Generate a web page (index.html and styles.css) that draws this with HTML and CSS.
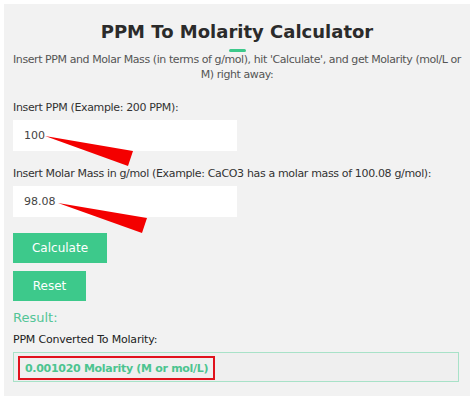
FILE: index.html
```html
<!DOCTYPE html>
<html lang="en">
<head>
    <meta charset="UTF-8">
    <meta name="viewport" content="width=device-width, initial-scale=1.0">
    <title>PPM To Molarity Calculator</title>
    <link rel="stylesheet" href="styles.css">
</head>
<body>
    <div class="panel">
        <h1>PPM To Molarity Calculator</h1>
        <div class="bar"></div>
        <p class="intro">Insert PPM and Molar Mass (in terms of g/mol), hit 'Calculate', and get Molarity (mol/L or M) right away:</p>

        <label class="field-label" for="ppm">Insert PPM (Example: 200 PPM):</label>
        <input type="text" id="ppm" class="field" value="100">

        <label class="field-label" for="mass">Insert Molar Mass in g/mol (Example: CaCO3 has a molar mass of 100.08 g/mol):</label>
        <input type="text" id="mass" class="field" value="98.08">

        <div class="actions">
            <button class="btn calc">Calculate</button>
            <button class="btn reset">Reset</button>
        </div>

        <h3 class="result-title">Result:</h3>
        <p class="result-label">PPM Converted To Molarity:</p>
        <div class="result-box">
            <span class="result-value">0.001020 Molarity (M or mol/L)</span>
        </div>

        <!-- red pointers drawn over the screenshot -->
        <svg class="pointers" width="474" height="400" viewBox="0 0 474 400">
            <polygon points="45,136 133,151 128,166" fill="#f40000"/>
            <polygon points="58,203 147,218 142,233" fill="#f40000"/>
        </svg>
    </div>
</body>
</html>
```

FILE: styles.css
```css
body {
    margin: 0;
    background: #fff;
    font-family: "DejaVu Sans", sans-serif;
    color: #333;
}
.panel {
    position: relative;
    margin: 4px;
    height: 392px;
    background: #f2f2f2;
    padding: 0 9px;
    box-sizing: border-box;
}
h1 {
    margin: 0;
    padding-top: 15px;
    text-align: center;
    font-size: 18px;
    line-height: 26px;
    font-weight: bold;
    color: #2b2b2b;
}
.bar {
    width: 17px;
    height: 3px;
    margin: 4px auto 0;
    border-radius: 2px;
    background: #3dc98b;
}
.intro {
    margin: 0;
    padding-bottom: 3px;
    text-align: center;
    font-size: 11px;
    line-height: 15px;
    letter-spacing: -0.42px;
    color: #555;
}
.field-label {
    display: block;
    margin-top: 16px;
    font-size: 11px;
    line-height: 14px;
    letter-spacing: -0.35px;
    color: #333;
}
.field {
    display: block;
    margin-top: 5px;
    width: 224px;
    height: 31px;
    box-sizing: border-box;
    border: none;
    padding: 0 11px;
    background: #fff;
    font-family: inherit;
    font-size: 11px;
    color: #444;
}
.actions {
    display: flex;
    flex-direction: column;
    align-items: flex-start;
    gap: 8px;
    margin-top: 16px;
}
.btn {
    height: 30px;
    border: none;
    background: #3dc98b;
    color: #fff;
    font-family: inherit;
    font-size: 12px;
}
.btn.calc { width: 94px; }
.btn.reset { width: 73px; }
.result-title {
    margin: 8px 0 0;
    font-size: 13px;
    line-height: 18px;
    font-weight: normal;
    color: #52c596;
}
.result-label {
    margin: 6px 0 0;
    font-size: 11px;
    line-height: 14px;
    letter-spacing: -0.2px;
    color: #222;
}
.result-box {
    margin-top: 5px;
    width: 446px;
    height: 30px;
    box-sizing: border-box;
    border: 1px solid #a8e2c8;
    background: #efefef;
    padding: 3px 4px;
}
.result-value {
    display: inline-block;
    border: 2px solid #e0121c;
    padding: 3px 5px 2px;
    font-size: 11px;
    line-height: 15px;
    letter-spacing: -0.3px;
    font-weight: bold;
    color: #4cc48f;
}
.pointers {
    position: absolute;
    left: -4px;
    top: -4px;
    pointer-events: none;
}
```
